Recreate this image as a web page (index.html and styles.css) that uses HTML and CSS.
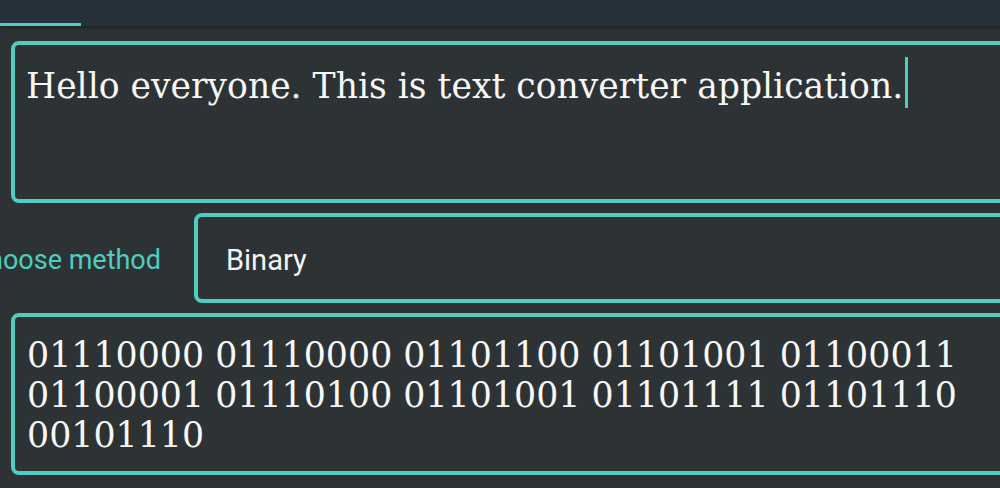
FILE: index.html
```html
<!DOCTYPE html>
<html>
<head>
<meta charset="utf-8">
<link rel="stylesheet" href="styles.css">
</head>
<body>
<header class="topbar"><div class="tab-indicator"></div></header>
<main class="content">
  <div class="field input-field">
    <span class="input-text">Hello everyone. This is text converter application.</span><span class="caret"></span>
  </div>
  <div class="method-row">
    <div class="method-label"><span>Choose method</span></div>
    <div class="field select-field"><span class="select-value">Binary</span></div>
  </div>
  <div class="field output-field">
    <p class="output-text">01110000 01110000 01101100 01101001 01100011 01100001 01110100 01101001 01101111 01101110 00101110</p>
  </div>
</main>
</body>
</html>
```
FILE: styles.css
```css
* { box-sizing: border-box; }
html, body {
  margin: 0;
  padding: 0;
  width: 1000px;
  height: 488px;
  overflow: hidden;
  background: #2d3335;
}
.topbar {
  height: 26px;
  background: #263139;
  position: relative;
  box-shadow: 0 2px 4px rgba(0,0,0,0.35);
}
.tab-indicator {
  position: absolute;
  left: 0;
  bottom: 0;
  width: 81px;
  height: 3px;
  background: #4ecdc0;
}
.content {
  padding: 15px 0 0 11px;
  display: flex;
  flex-direction: column;
  gap: 10px;
  width: 1020px;
}
.field {
  border: 4px solid #4ecdc0;
  border-radius: 8px;
}
.input-field {
  height: 162px;
  padding: 20px 11px;
  display: flex;
  align-items: flex-start;
}
.input-text {
  font-family: "DejaVu Serif", serif;
  font-size: 34.6px;
  color: #f7f7f7;
  white-space: nowrap;
  line-height: 42px;
}
.caret {
  display: inline-block;
  width: 3px;
  height: 51px;
  margin-top: -8px;
  margin-left: 2px;
  background: #4ecdc0;
}
.method-row {
  display: flex;
  align-items: center;
  margin-left: -11px;
}
.method-label {
  width: 161px;
  flex: none;
  display: flex;
  justify-content: flex-end;
  margin-right: 33px;
  padding-top: 3px;
}
.method-label span {
  font-family: Roboto, sans-serif;
  font-size: 27px;
  color: #4ecdc0;
  white-space: nowrap;
}
.select-field {
  flex: 1;
  height: 90px;
  display: flex;
  align-items: center;
  padding-left: 28px;
  padding-top: 3px;
}
.select-value {
  font-family: Roboto, sans-serif;
  font-size: 29px;
  color: #f5f5f5;
}
.output-field {
  height: 162px;
  padding: 18px 11px 0 12px;
}
.output-text {
  margin: 0;
  width: 960px;
  font-family: "DejaVu Serif", serif;
  font-size: 34.8px;
  line-height: 40px;
  color: #f7f7f7;
}
```
